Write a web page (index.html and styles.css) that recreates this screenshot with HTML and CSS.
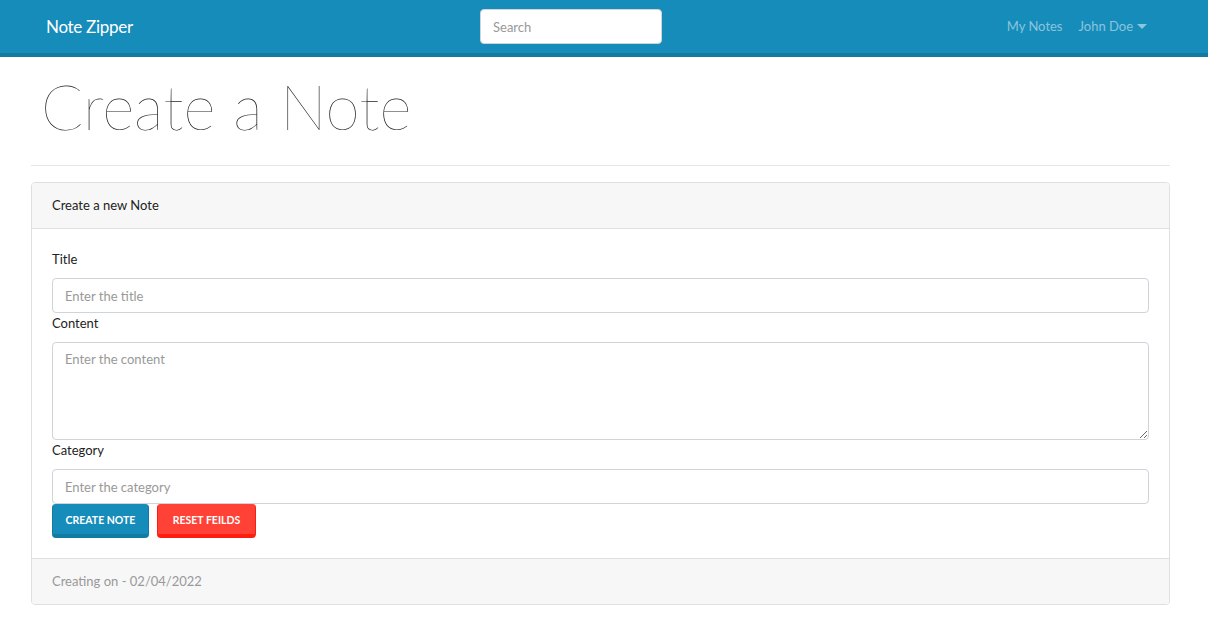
FILE: index.html
```html
<!DOCTYPE html>
<html lang="en">
<head>
<meta charset="utf-8">
<title>Note Zipper</title>
<link rel="stylesheet" href="styles.css">
</head>
<body>
<nav class="navbar">
  <a class="brand" href="#">Note Zipper</a>
  <form class="search-form"><input class="search" type="text" placeholder="Search"></form>
  <ul class="nav-links">
    <li><a href="#">My Notes</a></li>
    <li><a href="#" class="dropdown">John Doe<span class="caret"></span></a></li>
  </ul>
</nav>
<main class="main">
  <div class="page-head">
    <h1 class="page-title">Create a Note</h1>
  </div>
  <hr class="divider">
  <section class="card">
    <div class="card-header">Create a new Note</div>
    <div class="card-body">
      <form class="note-form">
        <label class="label" for="title">Title</label>
        <input class="control" id="title" type="text" placeholder="Enter the title">
        <label class="label" for="content">Content</label>
        <textarea class="control textarea" id="content" rows="4" placeholder="Enter the content"></textarea>
        <label class="label" for="category">Category</label>
        <input class="control" id="category" type="text" placeholder="Enter the category">
        <div class="buttons">
          <button type="button" class="btn btn-primary">Create Note</button>
          <button type="button" class="btn btn-danger">Reset Feilds</button>
        </div>
      </form>
    </div>
    <div class="card-footer">Creating on - 02/04/2022</div>
  </section>
</main>
</body>
</html>
```

FILE: styles.css
```css
* { box-sizing: border-box; }
body {
  margin: 0;
  font-family: "Lato", "Liberation Sans", sans-serif;
  font-size: 13px;
  line-height: 1.5;
  color: #222;
  background: #fff;
}
.navbar {
  display: grid;
  grid-template-columns: 434px 182px 1fr;
  align-items: center;
  height: 57px;
  padding: 0 61px 0 46px;
  background: #158cba;
  border-bottom: 4px solid #127ba3;
}
.brand {
  color: #fff;
  font-size: 17px;
  letter-spacing: -0.3px;
  text-decoration: none;
  line-height: 1.5;
}
.search-form { margin: 0; }
.search {
  display: block;
  width: 182px;
  height: 35px;
  padding: 6px 12px;
  font: inherit;
  font-size: 13px;
  border: 1px solid #ced4da;
  border-radius: 4px;
  background: #fff;
  color: #555;
}
.search::placeholder { color: #999; }
.nav-links {
  display: flex;
  justify-content: flex-end;
  list-style: none;
  margin: 0;
  padding: 0;
  gap: 16px;
}
.nav-links a {
  color: rgba(255,255,255,0.5);
  text-decoration: none;
  font-size: 13px;
}
.dropdown { display: inline-flex; align-items: center; }
.caret {
  display: inline-block;
  margin-left: 4px;
  border-top: 5px solid rgba(255,255,255,0.5);
  border-left: 5px solid transparent;
  border-right: 5px solid transparent;
}
.main {
  padding: 0 38px 0 31px;
}
.page-head {
  padding: 12px 0 0 10px;
  height: 108px;
}
.page-title {
  margin: 0;
  font-family: "Lato", "Liberation Sans", sans-serif;
  font-weight: 100;
  font-size: 62px;
  line-height: 1.2;
  color: #222;
}
.divider {
  margin: 0 0 16px;
  border: 0;
  border-top: 1px solid #e5e5e5;
}
.card {
  border: 1px solid #dfdfdf;
  border-radius: 4px;
  overflow: hidden;
}
.card-header {
  padding: 12px 20px;
  background: #f7f7f7;
  border-bottom: 1px solid #dfdfdf;
  line-height: 21px;
}
.card-body { padding: 20px; }
.note-form { display: flex; flex-direction: column; margin: 0; }
.label {
  display: block;
  margin-bottom: 8px;
  line-height: 21px;
}
.control {
  display: block;
  width: 100%;
  height: 35px;
  padding: 6px 12px;
  font: inherit;
  font-size: 13px;
  line-height: 21px;
  color: #555;
  background: #fff;
  border: 1px solid #ced4da;
  border-radius: 4px;
}
.control::placeholder { color: #999; }
.textarea { height: 98px; resize: vertical; }
.buttons { display: flex; gap: 8px; }
.btn {
  height: 34px;
  padding: 5px 6px 3px;
  font-family: "Lato", "Liberation Sans", sans-serif;
  font-size: 10.5px;
  font-weight: 700;
  white-space: nowrap;
  text-transform: uppercase;
  color: #fff;
  border-style: solid;
  border-width: 0 1px 4px 1px;
  border-radius: 4px;
  cursor: pointer;
}
.btn-primary { background: #158cba; border-color: #127ba3; width: 97px; }
.btn-danger { background: #ff4136; border-color: #ff1d10; width: 99px; }
.card-footer {
  padding: 12px 20px;
  background: #f7f7f7;
  border-top: 1px solid #dfdfdf;
  color: #999;
  line-height: 21px;
}
```
